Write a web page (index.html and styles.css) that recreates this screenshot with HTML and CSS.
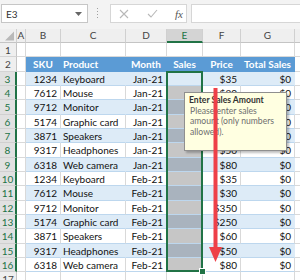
FILE: index.html
```html
<!DOCTYPE html>
<html>
<head>
<meta charset="utf-8">
<link rel="stylesheet" href="styles.css">
</head>
<body>
<div class="app">
  <div class="fbar">
    <div class="namebox"><span>E3</span><svg class="caret" width="7" height="4" viewBox="0 0 7 4"><path d="M0 0H7L3.5 4Z" fill="#666"/></svg></div>
    <svg class="grip" width="3" height="11" viewBox="0 0 3 11"><rect x="1" y="0" width="1" height="1" fill="#a0a0a0"/><rect x="1" y="3" width="1" height="1" fill="#a0a0a0"/><rect x="1" y="6" width="1" height="1" fill="#a0a0a0"/><rect x="1" y="9" width="1" height="1" fill="#a0a0a0"/></svg>
    <div class="btns">
      <svg class="ico-x" width="10" height="10" viewBox="0 0 10 10"><path d="M1 1L9 9M9 1L1 9" stroke="#b8b8b8" stroke-width="1.1" fill="none"/></svg>
      <svg class="ico-ok" width="11" height="9" viewBox="0 0 11 9"><path d="M1 5L4 8L10 1" stroke="#b8b8b8" stroke-width="1.1" fill="none"/></svg>
      <span class="fx">fx</span>
    </div>
    <div class="formula"></div>
  </div>

  <div class="sheet">
    <div class="row hdr">
      <div class="c h corner"><svg width="16" height="13" viewBox="0 0 16 13"><path d="M5 11.5H14V2.5Z" fill="#b9b9b9"/></svg></div>
      <div class="c h">A</div><div class="c h">B</div><div class="c h">C</div><div class="c h">D</div><div class="c h hs">E</div><div class="c h">F</div><div class="c h">G</div><div class="c h"></div>
    </div>
    <div class="row">
      <div class="c rh">1</div><div class="c"></div><div class="c"></div><div class="c"></div><div class="c"></div><div class="c"></div><div class="c"></div><div class="c"></div><div class="c"></div>
    </div>
    <div class="row">
      <div class="c rh">2</div><div class="c"></div>
      <div class="c th">SKU</div><div class="c th l">Product</div><div class="c th">Month</div><div class="c th">Sales</div><div class="c th">Price</div><div class="c th">Total Sales</div>
      <div class="c"></div>
    </div>
    <div class="row b">
      <div class="c rh rs">3</div><div class="c"></div>
      <div class="c t n">1234</div><div class="c t">Keyboard</div><div class="c t n">Jan-21</div><div class="c t"></div><div class="c t n">$35</div><div class="c t n">$0</div><div class="c"></div>
    </div>
    <div class="row">
      <div class="c rh rs">4</div><div class="c"></div>
      <div class="c t n">7612</div><div class="c t">Mouse</div><div class="c t n">Jan-21</div><div class="c t sel"></div><div class="c t n">$30</div><div class="c t n">$0</div><div class="c"></div>
    </div>
    <div class="row b">
      <div class="c rh rs">5</div><div class="c"></div>
      <div class="c t n">9712</div><div class="c t">Monitor</div><div class="c t n">Jan-21</div><div class="c t sel"></div><div class="c t n">$350</div><div class="c t n">$0</div><div class="c"></div>
    </div>
    <div class="row">
      <div class="c rh rs">6</div><div class="c"></div>
      <div class="c t n">5174</div><div class="c t">Graphic card</div><div class="c t n">Jan-21</div><div class="c t sel"></div><div class="c t n">$250</div><div class="c t n">$0</div><div class="c"></div>
    </div>
    <div class="row b">
      <div class="c rh rs">7</div><div class="c"></div>
      <div class="c t n">3871</div><div class="c t">Speakers</div><div class="c t n">Jan-21</div><div class="c t sel"></div><div class="c t n">$60</div><div class="c t n">$0</div><div class="c"></div>
    </div>
    <div class="row">
      <div class="c rh rs">8</div><div class="c"></div>
      <div class="c t n">9317</div><div class="c t">Headphones</div><div class="c t n">Jan-21</div><div class="c t sel"></div><div class="c t n">$50</div><div class="c t n">$0</div><div class="c"></div>
    </div>
    <div class="row b">
      <div class="c rh rs">9</div><div class="c"></div>
      <div class="c t n">6318</div><div class="c t">Web camera</div><div class="c t n">Jan-21</div><div class="c t sel"></div><div class="c t n">$80</div><div class="c t n">$0</div><div class="c"></div>
    </div>
    <div class="row">
      <div class="c rh rs">10</div><div class="c"></div>
      <div class="c t n">1234</div><div class="c t">Keyboard</div><div class="c t n">Feb-21</div><div class="c t sel"></div><div class="c t n">$35</div><div class="c t n">$0</div><div class="c"></div>
    </div>
    <div class="row b">
      <div class="c rh rs">11</div><div class="c"></div>
      <div class="c t n">7612</div><div class="c t">Mouse</div><div class="c t n">Feb-21</div><div class="c t sel"></div><div class="c t n">$30</div><div class="c t n">$0</div><div class="c"></div>
    </div>
    <div class="row">
      <div class="c rh rs">12</div><div class="c"></div>
      <div class="c t n">9712</div><div class="c t">Monitor</div><div class="c t n">Feb-21</div><div class="c t sel"></div><div class="c t n">$350</div><div class="c t n">$0</div><div class="c"></div>
    </div>
    <div class="row b">
      <div class="c rh rs">13</div><div class="c"></div>
      <div class="c t n">5174</div><div class="c t">Graphic card</div><div class="c t n">Feb-21</div><div class="c t sel"></div><div class="c t n">$250</div><div class="c t n">$0</div><div class="c"></div>
    </div>
    <div class="row">
      <div class="c rh rs">14</div><div class="c"></div>
      <div class="c t n">3871</div><div class="c t">Speakers</div><div class="c t n">Feb-21</div><div class="c t sel"></div><div class="c t n">$60</div><div class="c t n">$0</div><div class="c"></div>
    </div>
    <div class="row b">
      <div class="c rh rs">15</div><div class="c"></div>
      <div class="c t n">9317</div><div class="c t">Headphones</div><div class="c t n">Feb-21</div><div class="c t sel"></div><div class="c t n">$50</div><div class="c t n">$0</div><div class="c"></div>
    </div>
    <div class="row">
      <div class="c rh rs">16</div><div class="c"></div>
      <div class="c t n">6318</div><div class="c t">Web camera</div><div class="c t n">Feb-21</div><div class="c t sel"></div><div class="c t n">$80</div><div class="c t n">$0</div><div class="c"></div>
    </div>
    <div class="row">
      <div class="c rh">17</div><div class="c"></div><div class="c"></div><div class="c"></div><div class="c"></div><div class="c"></div><div class="c"></div><div class="c"></div><div class="c"></div>
    </div>
  </div>

  <div class="selbox"></div>
  <div class="handle"></div>

  <div class="tip">
    <div class="tip-title">Enter Sales Amount</div>
    <div class="tip-body">Please enter sales<br>amount (only numbers<br>allowed).</div>
  </div>

  <svg class="arrow" width="20" height="180" viewBox="0 0 20 180">
    <rect x="8.5" y="3" width="4" height="162" fill="#ee4048"/>
    <path d="M4 162H17L10.5 177Z" fill="#ee4048"/>
  </svg>
</div>
</body>
</html>
```

FILE: styles.css
```css
html, body {
  margin: 0;
  padding: 0;
}
body {
  width: 300px;
  height: 280px;
  overflow: hidden;
  background: #fff;
  font-family: Lato, "Liberation Sans", sans-serif;
}
.app {
  position: relative;
  width: 300px;
  height: 280px;
  overflow: hidden;
}

/* formula bar */
.fbar {
  height: 29px;
  background: #f3f3f3;
  display: flex;
  align-items: flex-start;
  padding-top: 4px;
  box-sizing: border-box;
}
.namebox {
  margin-left: 1px;
  width: 87px;
  height: 19px;
  flex: none;
  background: #fff;
  border: 1px solid #c6c6c6;
  box-sizing: border-box;
  display: flex;
  align-items: center;
  padding-left: 4px;
  font-size: 10px;
  color: #333;
}
.caret {
  margin-left: auto;
  margin-right: 5px;
}
.grip {
  flex: none;
  margin-left: 8px;
  margin-top: 4px;
}
.btns {
  flex: none;
  margin-left: 11px;
  width: 77px;
  height: 19px;
  background: #fff;
  border: 1px solid #d6d6d6;
  box-sizing: border-box;
  display: flex;
  align-items: center;
  position: relative;
}
.ico-x {
  margin-left: 8px;
}
.ico-ok {
  margin-left: 18px;
}
.fx {
  margin-left: 17px;
  font-family: "Liberation Serif", serif;
  font-style: italic;
  font-size: 11px;
  color: #555;
}
.formula {
  flex: none;
  margin-left: 4px;
  width: 112px;
  height: 19px;
  background: #fff;
  border: 1px solid #d6d6d6;
  box-sizing: border-box;
}

/* sheet */
.row {
  display: grid;
  grid-template-columns: 17px 9px 35px 65px 41px 36px 38px 54px 6px;
  height: 14.33px;
}
.row.hdr {
  height: 14px;
}
.c {
  box-sizing: border-box;
  border-right: 1px solid #d9d9d9;
  border-bottom: 1px solid #d9d9d9;
  font-size: 10px;
  line-height: 14px;
  padding: 0 2px;
  white-space: nowrap;
  overflow: hidden;
  color: #111;
}
.n {
  text-align: right;
  padding-right: 3px;
}
.h {
  background: #efefef;
  border-right-color: #d0d0d0;
  border-bottom-color: #c4c4c4;
  text-align: center;
  color: #444;
  line-height: 13px;
  padding: 0;
}
.h.hs {
  background: #d4d4d4;
  color: #217346;
  border-bottom: 2px solid #217346;
}
.corner {
  position: relative;
}
.corner svg {
  display: block;
}
.rh {
  background: #efefef;
  border-right-color: #c4c4c4;
  border-bottom-color: #d4d4d4;
  text-align: center;
  color: #444;
  padding: 0;
}
.rh.rs {
  background: #e1e1e1;
  color: #217346;
  border-right: 2px solid #217346;
  border-bottom-color: #d0d0d0;
}
.th {
  background: #5b9bd5;
  border-right-color: #5b9bd5;
  border-bottom-color: #5b9bd5;
  color: #fff;
  font-weight: bold;
  text-align: center;
}
.th.l {
  text-align: left;
}
.t {
  border-bottom-color: #bdd7ee;
}
.row.b .t {
  background: #ddebf7;
  border-right-color: #ddebf7;
}
.t.sel {
  background: #c6c6c6;
  border-right-color: #c6c6c6;
}
.row.b .t.sel {
  background: #a9b3be;
  border-right-color: #a9b3be;
}

/* overlays */
.selbox {
  position: absolute;
  left: 166px;
  top: 71px;
  width: 37px;
  height: 201px;
  border: 2px solid #217346;
  box-sizing: border-box;
}
.handle {
  position: absolute;
  left: 199px;
  top: 268px;
  width: 5px;
  height: 5px;
  background: #217346;
  border: 1px solid #fff;
}
.tip {
  position: absolute;
  left: 184px;
  top: 92px;
  width: 103px;
  height: 59px;
  box-sizing: border-box;
  background: #ffffe1;
  border: 1px solid #8f8f8f;
  box-shadow: 2px 2px 2px rgba(0, 0, 0, 0.25);
  padding: 2px 3px 0 4px;
  font-size: 8.6px;
  line-height: 10.7px;
}
.tip-title {
  font-weight: bold;
  color: #333;
}
.tip-body {
  color: #6e6e6e;
  padding-left: 1px;
}
.arrow {
  position: absolute;
  left: 205px;
  top: 85px;
}
```
